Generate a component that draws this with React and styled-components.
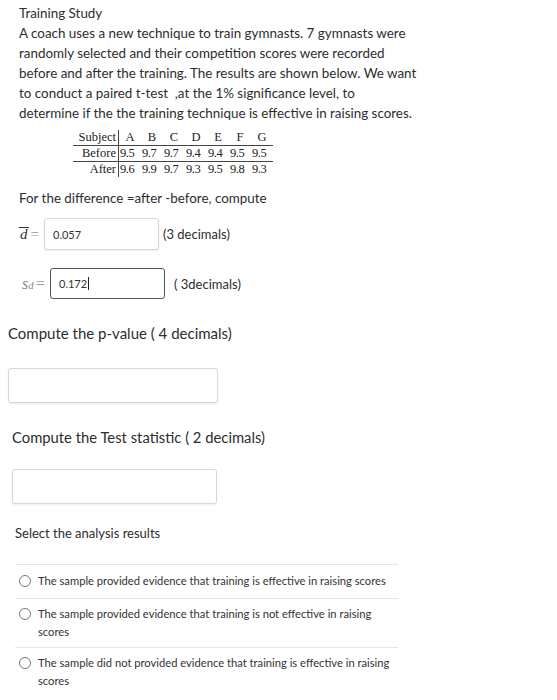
import React from 'react';
import styled, { createGlobalStyle } from 'styled-components';

const GlobalStyle = createGlobalStyle`
  html, body {
    margin: 0;
    padding: 0;
    background: #fff;
  }
  body {
    font-family: Lato, "Liberation Sans", sans-serif;
    color: #2d2d2d;
  }
`;

const Page = styled.div`
  width: 557px;
  height: 700px;
  overflow: hidden;
  display: flex;
  flex-direction: column;
  align-items: flex-start;
`;

const Intro = styled.div`
  padding: 3px 0 0 19px;
  font-size: 13.4px;
  line-height: 20px;
  white-space: nowrap;
`;

const Para = styled.p`
  margin: 0;
`;

const DataTable = styled.table`
  margin: 7px 0 0 73px;
  border-collapse: collapse;
  font-family: "Liberation Serif", "DejaVu Serif", serif;
  font-size: 12.5px;
  color: #222;
  line-height: 15px;

  th, td {
    padding: 0 1px;
    font-weight: normal;
    white-space: nowrap;
  }
  tr + tr td {
    border-top: 1px solid #444;
  }
  td:first-child, th:first-child {
    border-right: 1px solid #444;
    text-align: right;
    width: 42px;
    padding-right: 2px;
  }
`;

const HeadCell = styled.th`
  width: 20px;
  text-align: center;
`;

const NumCell = styled.td`
  width: 20px;
  letter-spacing: -0.4px;
`;

const Prompt = styled.div`
  padding-left: ${p => p.$left}px;
  margin-top: ${p => p.$top}px;
  font-size: ${p => p.$size || 13}px;
  line-height: 18px;
`;

const Row = styled.div`
  display: flex;
  align-items: center;
  margin-top: ${p => p.$top}px;
  padding-left: ${p => p.$left}px;
`;

const Symbol = styled.span`
  font-family: "Liberation Serif", "DejaVu Serif", serif;
  font-style: italic;
  font-size: ${p => p.$size || 15}px;
  color: ${p => p.$color || '#333'};
  width: ${p => p.$w}px;
  display: inline-flex;
  align-items: baseline;
`;

const Bar = styled.span`
  border-top: 1px solid #333;
  line-height: 13px;
  padding: 0 1px;
`;

const Eq = styled.span`
  font-style: normal;
  color: #999;
  margin-left: ${p => p.$ml || 2}px;
`;

const Sub = styled.sub`
  font-size: 11px;
  vertical-align: -3px;
`;

const Box = styled.div`
  width: ${p => p.$w}px;
  height: ${p => p.$h}px;
  box-sizing: border-box;
  border: 1px solid ${p => (p.$focus ? '#555' : '#d6d6d6')};
  border-radius: 3px;
  box-shadow: ${p => (p.$focus ? 'none' : '0 1px 2px rgba(0,0,0,0.08)')};
  display: flex;
  align-items: center;
  padding-left: 8px;
  font-size: 11px;
  color: #333;
  background: #fff;
`;

const Caret = styled.span`
  display: inline-block;
  width: 1px;
  height: 13px;
  background: #222;
  margin-left: 1px;
`;

const Hint = styled.span`
  font-size: 13px;
  margin-left: ${p => p.$ml}px;
  color: #2d2d2d;
`;

const Options = styled.div`
  margin: 22px 0 0 15px;
  width: 383px;
`;

const Option = styled.div`
  display: flex;
  align-items: flex-start;
  border-top: 1px solid #e6e6e6;
  padding: ${p => p.$pad || '8px 0 7px'};
  font-size: 11.2px;
  line-height: 18px;
  color: #333;
`;

const Radio = styled.span`
  flex: none;
  width: 10px;
  height: 10px;
  border: 1px solid #777;
  border-radius: 50%;
  margin: 3px 7px 0 4px;
`;

const options = [
  'The sample provided evidence that training is effective in raising scores',
  'The sample provided evidence that training is not effective in raising scores',
  'The sample did not provided evidence that training is effective in raising scores',
];

export default function App() {
  return (
    <Page>
      <GlobalStyle />
      <Intro>
        <Para>Training Study</Para>
        <Para>
          A coach uses a new technique to train gymnasts. 7 gymnasts were<br />
          randomly selected and their competition scores were recorded<br />
          before and after the training. The results are shown below. We want<br />
          to conduct a paired t-test &nbsp;,at the 1% significance level, to<br />
          determine if the the training technique is effective in raising scores.
        </Para>
      </Intro>

      <DataTable>
        <tbody>
          <tr>
            <th>Subject</th>
            {['A', 'B', 'C', 'D', 'E', 'F', 'G'].map(s => (
              <HeadCell key={s}>{s}</HeadCell>
            ))}
          </tr>
          <tr>
            <td>Before</td>
            {['9.5', '9.7', '9.7', '9.4', '9.4', '9.5', '9.5'].map((v, i) => (
              <NumCell key={i}>{v}</NumCell>
            ))}
          </tr>
          <tr>
            <td>After</td>
            {['9.6', '9.9', '9.7', '9.3', '9.5', '9.8', '9.3'].map((v, i) => (
              <NumCell key={i}>{v}</NumCell>
            ))}
          </tr>
        </tbody>
      </DataTable>

      <Prompt $left={19} $top={12} $size={13.4}>For the difference =after -before, compute</Prompt>

      <Row $left={19} $top={11}>
        <Symbol $w={25}>
          <Bar>d</Bar>
          <Eq>=</Eq>
        </Symbol>
        <Box $w={115} $h={32}>0.057</Box>
        <Hint $ml={4}>(3 decimals)</Hint>
      </Row>

      <Row $left={22} $top={18}>
        <Symbol $w={28} $size={16} $color="#8a8a8a">
          s<Sub>d</Sub>
          <Eq $ml={2}>=</Eq>
        </Symbol>
        <Box $w={115} $h={31} $focus>
          0.172<Caret />
        </Box>
        <Hint $ml={9}>( 3decimals)</Hint>
      </Row>

      <Prompt $left={8} $top={25} $size={15}>Compute the p-value ( 4 decimals)</Prompt>
      <Row $left={8} $top={26}>
        <Box $w={210} $h={35} />
      </Row>

      <Prompt $left={12} $top={25} $size={14.8}>Compute the Test statistic ( 2 decimals)</Prompt>
      <Row $left={12} $top={23}>
        <Box $w={205} $h={35} />
      </Row>

      <Prompt $left={15} $top={20} $size={13}>Select the analysis results</Prompt>

      <Options>
        {options.map((t, i) => (
          <Option key={i} $pad={i === 0 ? '7px 0 8px' : '6px 0 6px'}>
            <Radio />
            <span>{t}</span>
          </Option>
        ))}
      </Options>
    </Page>
  );
}
